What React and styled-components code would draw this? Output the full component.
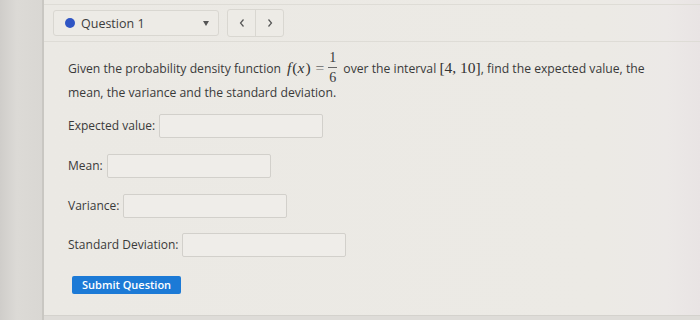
import React from "react";
import styled, { createGlobalStyle } from "styled-components";

const Global = createGlobalStyle`
  html, body { margin: 0; padding: 0; }
  body { width: 700px; height: 320px; overflow: hidden; background: #dedcd8; font-family: "Open Sans", "DejaVu Sans", sans-serif; }
`;

const Frame = styled.div`
  display: flex;
  width: 700px;
  height: 320px;
`;

const Side = styled.div`
  width: 42px;
  flex: none;
  background: linear-gradient(90deg, #cfcdca 0%, #dcdad6 40%, #d9d7d3 100%);
  border-right: 2px solid #c9c7c2;
`;

const Main = styled.div`
  flex: 1;
  height: 315px;
  background: linear-gradient(90deg, #ebe9e4 0%, #eceae5 85%, #ece9e7 95%, #e9e4e4 100%);
  border-bottom: 1px solid #d4d2cd;
  display: flex;
  flex-direction: column;
`;

const TopBar = styled.div`
  display: flex;
  align-items: center;
  gap: 8px;
  height: 36px;
  margin-top: 4px;
  padding-left: 9px;
  border-top: 1px solid #dedcd6;
  border-bottom: 1px solid #dedcd6;
`;

const Select = styled.div`
  width: 166px;
  height: 26px;
  box-sizing: border-box;
  border: 1px solid #d9d7d1;
  border-radius: 3px;
  background: #edebe6;
  display: flex;
  align-items: center;
  padding: 0 9px 0 11px;
  font-size: 12.5px;
  color: #3c3c3c;
`;

const Dot = styled.span`
  width: 10px;
  height: 10px;
  border-radius: 50%;
  background: #2f55c4;
  margin-right: 6px;
  flex: none;
`;

const Caret = styled.span`
  margin-left: auto;
  width: 0;
  height: 0;
  border-left: 3px solid transparent;
  border-right: 3px solid transparent;
  border-top: 5px solid #555;
`;

const Nav = styled.div`
  display: flex;
  height: 26px;
  border: 1px solid #d9d7d1;
  border-radius: 3px;
  background: #edebe6;
`;

const NavBtn = styled.div`
  width: 27px;
  display: flex;
  align-items: center;
  justify-content: center;
  & + & { border-left: 1px solid #d9d7d1; }
`;

const Body = styled.div`
  padding: 15px 0 0 24px;
  display: flex;
  flex-direction: column;
  font-family: "Open Sans", sans-serif;
  font-size: 12px;
  color: #3a3a3a;
`;

const Prompt = styled.div`
  font-size: 12.2px;
  line-height: 22px;
  width: 580px;
`;

const Math = styled.span`
  font-family: "Liberation Serif", serif;
  font-size: 15.5px;
  color: #333;
  margin: 0 ${p => p.$mr || 0}px 0 ${p => p.$ml || 0}px;
`;

const MathI = styled.i`
  font-family: "Liberation Serif", serif;
  padding-right: 1px;
`;

const Eq = styled.span`
  margin: 0 4px 0 5px;
  color: #666;
`;

const Frac = styled.span`
  display: inline-flex;
  flex-direction: column;
  align-items: center;
  vertical-align: middle;
  font-family: "Liberation Serif", serif;
  font-size: 14px;
  line-height: 14px;
  margin: -5px 6px -5px 0;
  position: relative;
  top: -2px;
  & > span:first-child {
    border-bottom: 1px solid #666;
    padding: 0 1px 2px;
  }
  & > span:last-child { padding-top: 3px; }
`;

const Field = styled.div`
  display: flex;
  align-items: center;
  gap: 4px;
  height: 24px;
  margin-top: ${p => p.$mt}px;
`;

const Input = styled.div`
  width: 164px;
  height: 24px;
  box-sizing: border-box;
  border: 1px solid #d2d0cb;
  border-radius: 2px;
  background: #efede9;
`;

const Submit = styled.div`
  align-self: flex-start;
  margin: 19px 0 0 4px;
  background: #1c7ad6;
  color: #fff;
  font-weight: 600;
  font-size: 11px;
  height: 18px;
  line-height: 18px;
  padding: 0 10px;
  border-radius: 2px;
`;

const Chevron = ({ dir }) => (
  <svg width="8" height="10" viewBox="0 0 8 10" fill="none" stroke="#555" strokeWidth="1.2">
    {dir === "left" ? <path d="M5.5 1.5 L2.5 5 L5.5 8.5" /> : <path d="M2.5 1.5 L5.5 5 L2.5 8.5" />}
  </svg>
);

export default function App() {
  return (
    <>
      <Global />
      <Frame>
        <Side />
        <Main>
          <TopBar>
            <Select>
              <Dot />
              Question 1
              <Caret />
            </Select>
            <Nav>
              <NavBtn><Chevron dir="left" /></NavBtn>
              <NavBtn><Chevron dir="right" /></NavBtn>
            </Nav>
          </TopBar>
          <Body>
            <Prompt>
              Given the probability density function
              <Math $ml={6}><MathI>f</MathI>(<MathI>x</MathI>)<Eq>=</Eq></Math>
              <Frac><span>1</span><span>6</span></Frac>
              over the interval <Math>[4, 10]</Math>, find the expected value, the mean, the variance and the standard deviation.
            </Prompt>
            <Field $mt={10}>Expected value: <Input /></Field>
            <Field $mt={16}>Mean: <Input /></Field>
            <Field $mt={16}>Variance: <Input /></Field>
            <Field $mt={15}>Standard Deviation: <Input /></Field>
            <Submit>Submit Question</Submit>
          </Body>
        </Main>
      </Frame>
    </>
  );
}
